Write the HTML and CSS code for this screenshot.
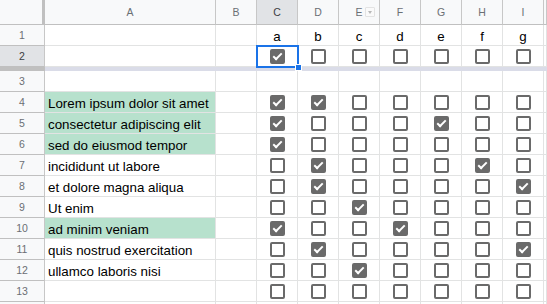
FILE: index.html
```html
<!DOCTYPE html>
<html>
<head>
<meta charset="utf-8">
<link rel="stylesheet" href="styles.css">
</head>
<body>
<div class="sheet">
  <div class="row hdr">
    <div class="corner"></div>
    <div class="ch">A</div>
    <div class="ch">B</div>
    <div class="ch sel">C</div>
    <div class="ch">D</div>
    <div class="ch filt">E<span class="dd"></span></div>
    <div class="ch">F</div>
    <div class="ch">G</div>
    <div class="ch">H</div>
    <div class="ch">I</div>
    <div class="ch"></div>
  </div>

  <div class="row">
    <div class="rh">1</div>
    <div class="c"></div><div class="c"></div>
    <div class="c lbl">a</div><div class="c lbl">b</div><div class="c lbl">c</div><div class="c lbl">d</div><div class="c lbl">e</div><div class="c lbl">f</div><div class="c lbl">g</div>
    <div class="c"></div>
  </div>

  <div class="row">
    <div class="rh sel">2</div>
    <div class="c"></div><div class="c"></div>
    <div class="c k active"><span class="cb on"></span><span class="handle"></span></div>
    <div class="c k"><span class="cb"></span></div><div class="c k"><span class="cb"></span></div><div class="c k"><span class="cb"></span></div><div class="c k"><span class="cb"></span></div><div class="c k"><span class="cb"></span></div><div class="c k"><span class="cb"></span></div>
    <div class="c"></div>
  </div>

  <div class="freeze"><div class="fz-h"></div><div class="fz-c"></div></div>

  <div class="row">
    <div class="rh">3</div>
    <div class="c"></div><div class="c"></div><div class="c"></div><div class="c"></div><div class="c"></div><div class="c"></div><div class="c"></div><div class="c"></div><div class="c"></div><div class="c"></div>
  </div>

  <div class="row">
    <div class="rh">4</div>
    <div class="c t g">Lorem ipsum dolor sit amet</div><div class="c"></div>
    <div class="c k"><span class="cb on"></span></div><div class="c k"><span class="cb on"></span></div><div class="c k"><span class="cb"></span></div><div class="c k"><span class="cb"></span></div><div class="c k"><span class="cb"></span></div><div class="c k"><span class="cb"></span></div><div class="c k"><span class="cb"></span></div>
    <div class="c"></div>
  </div>

  <div class="row">
    <div class="rh">5</div>
    <div class="c t g">consectetur adipiscing elit</div><div class="c"></div>
    <div class="c k"><span class="cb on"></span></div><div class="c k"><span class="cb"></span></div><div class="c k"><span class="cb"></span></div><div class="c k"><span class="cb"></span></div><div class="c k"><span class="cb on"></span></div><div class="c k"><span class="cb"></span></div><div class="c k"><span class="cb"></span></div>
    <div class="c"></div>
  </div>

  <div class="row">
    <div class="rh">6</div>
    <div class="c t g">sed do eiusmod tempor</div><div class="c"></div>
    <div class="c k"><span class="cb on"></span></div><div class="c k"><span class="cb"></span></div><div class="c k"><span class="cb"></span></div><div class="c k"><span class="cb"></span></div><div class="c k"><span class="cb"></span></div><div class="c k"><span class="cb"></span></div><div class="c k"><span class="cb"></span></div>
    <div class="c"></div>
  </div>

  <div class="row">
    <div class="rh">7</div>
    <div class="c t">incididunt ut labore</div><div class="c"></div>
    <div class="c k"><span class="cb"></span></div><div class="c k"><span class="cb on"></span></div><div class="c k"><span class="cb"></span></div><div class="c k"><span class="cb"></span></div><div class="c k"><span class="cb"></span></div><div class="c k"><span class="cb on"></span></div><div class="c k"><span class="cb"></span></div>
    <div class="c"></div>
  </div>

  <div class="row">
    <div class="rh">8</div>
    <div class="c t">et dolore magna aliqua</div><div class="c"></div>
    <div class="c k"><span class="cb"></span></div><div class="c k"><span class="cb on"></span></div><div class="c k"><span class="cb"></span></div><div class="c k"><span class="cb"></span></div><div class="c k"><span class="cb"></span></div><div class="c k"><span class="cb"></span></div><div class="c k"><span class="cb on"></span></div>
    <div class="c"></div>
  </div>

  <div class="row">
    <div class="rh">9</div>
    <div class="c t">Ut enim</div><div class="c"></div>
    <div class="c k"><span class="cb"></span></div><div class="c k"><span class="cb"></span></div><div class="c k"><span class="cb on"></span></div><div class="c k"><span class="cb"></span></div><div class="c k"><span class="cb"></span></div><div class="c k"><span class="cb"></span></div><div class="c k"><span class="cb"></span></div>
    <div class="c"></div>
  </div>

  <div class="row">
    <div class="rh">10</div>
    <div class="c t g">ad minim veniam</div><div class="c"></div>
    <div class="c k"><span class="cb on"></span></div><div class="c k"><span class="cb"></span></div><div class="c k"><span class="cb"></span></div><div class="c k"><span class="cb on"></span></div><div class="c k"><span class="cb"></span></div><div class="c k"><span class="cb"></span></div><div class="c k"><span class="cb"></span></div>
    <div class="c"></div>
  </div>

  <div class="row">
    <div class="rh">11</div>
    <div class="c t">quis nostrud exercitation</div><div class="c"></div>
    <div class="c k"><span class="cb"></span></div><div class="c k"><span class="cb on"></span></div><div class="c k"><span class="cb"></span></div><div class="c k"><span class="cb"></span></div><div class="c k"><span class="cb"></span></div><div class="c k"><span class="cb"></span></div><div class="c k"><span class="cb on"></span></div>
    <div class="c"></div>
  </div>

  <div class="row">
    <div class="rh">12</div>
    <div class="c t">ullamco laboris nisi</div><div class="c"></div>
    <div class="c k"><span class="cb"></span></div><div class="c k"><span class="cb"></span></div><div class="c k"><span class="cb on"></span></div><div class="c k"><span class="cb"></span></div><div class="c k"><span class="cb"></span></div><div class="c k"><span class="cb"></span></div><div class="c k"><span class="cb"></span></div>
    <div class="c"></div>
  </div>

  <div class="row">
    <div class="rh">13</div>
    <div class="c t"></div><div class="c"></div>
    <div class="c k"><span class="cb"></span></div><div class="c k"><span class="cb"></span></div><div class="c k"><span class="cb"></span></div><div class="c k"><span class="cb"></span></div><div class="c k"><span class="cb"></span></div><div class="c k"><span class="cb"></span></div><div class="c k"><span class="cb"></span></div>
    <div class="c"></div>
  </div>

  <div class="row">
    <div class="rh"></div>
    <div class="c"></div><div class="c"></div><div class="c"></div><div class="c"></div><div class="c"></div><div class="c"></div><div class="c"></div><div class="c"></div><div class="c"></div><div class="c"></div>
  </div>
</div>
</body>
</html>
```

FILE: styles.css
```css
html, body {
  margin: 0;
  padding: 0;
  background: #fff;
  overflow: hidden;
}
.sheet {
  width: 547px;
  height: 304px;
  overflow: hidden;
  font-family: "Liberation Sans", Arial, sans-serif;
  font-size: 13.333px;
  color: #000;
}
.row {
  display: grid;
  grid-template-columns: 45px 171px repeat(8, 41px) 1fr;
  height: 21px;
}
.row > div {
  box-sizing: border-box;
  border-right: 1px solid #e2e3e3;
  border-bottom: 1px solid #e2e3e3;
  min-width: 0;
}
.row.hdr {
  height: 25px;
}
.row.hdr > div {
  background: #f8f9fa;
  border-right: 1px solid #c7c7c7;
  border-bottom: 1px solid #c0c0c0;
}
.row.hdr > .corner {
  border-right: 3px solid #c0c0c0;
}
.ch {
  display: flex;
  align-items: center;
  justify-content: center;
  font-size: 10.5px;
  color: #6b6f74;
  position: relative;
}
.row.hdr > .ch.sel {
  background: #e1e3e6;
  color: #3c4043;
}
.dd {
  position: absolute;
  right: 4px;
  top: 7px;
  width: 10px;
  height: 10px;
  box-sizing: border-box;
  border: 1px solid #e3e3e3;
  border-radius: 1px;
  background: #fafafa;
}
.dd::after {
  content: "";
  position: absolute;
  left: 2px;
  top: 3px;
  border-left: 2.5px solid transparent;
  border-right: 2.5px solid transparent;
  border-top: 3px solid #b8b8b8;
}
.row > .rh {
  background: #f8f9fa;
  border-right: 1px solid #c7c7c7;
  border-bottom: 1px solid #c0c0c0;
  display: flex;
  align-items: center;
  justify-content: center;
  font-size: 10.5px;
  color: #6b6f74;
}
.row > .rh.sel {
  background: #e1e3e6;
  color: #3c4043;
}
.lbl {
  display: flex;
  align-items: flex-end;
  justify-content: center;
  line-height: 15px;
  padding-bottom: 1px;
}
.t {
  display: flex;
  align-items: flex-end;
  line-height: 15px;
  padding: 0 3px 1px 3px;
  white-space: nowrap;
  overflow: hidden;
}
.g {
  background: #b7e1cd;
}
.k {
  display: flex;
  align-items: center;
  justify-content: center;
  position: relative;
}
.cb {
  width: 15px;
  height: 15px;
  box-sizing: border-box;
  border: 2px solid #6a6a6a;
  border-radius: 2px;
  position: relative;
}
.cb.on {
  background: #6a6a6a;
}
.cb.on::after {
  content: "";
  position: absolute;
  box-sizing: content-box;
  left: 3px;
  top: 0px;
  width: 3px;
  height: 7px;
  border: solid #fff;
  border-width: 0 2px 2px 0;
  transform: rotate(45deg);
}
.active::before {
  content: "";
  position: absolute;
  left: -1px;
  top: -1px;
  width: 43px;
  height: 23px;
  box-sizing: border-box;
  border: 2px solid #1a73e8;
  z-index: 2;
}
.handle {
  position: absolute;
  right: -5px;
  bottom: -5px;
  width: 7px;
  height: 7px;
  box-sizing: border-box;
  background: #1a73e8;
  border: 1px solid #fff;
  z-index: 3;
}
.freeze {
  display: grid;
  grid-template-columns: 45px 1fr;
  height: 4px;
}
.fz-h {
  background: #c0c0c0;
}
.fz-c {
  background: #dadce8;
}
```
